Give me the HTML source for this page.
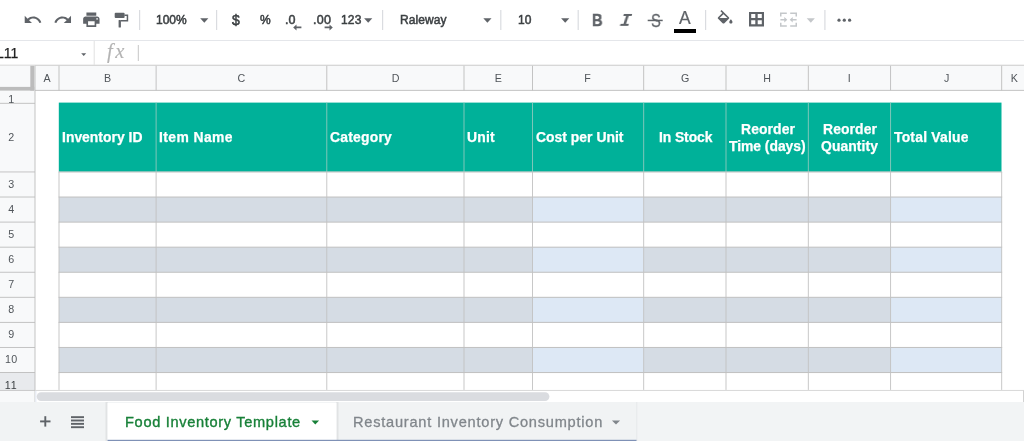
<!DOCTYPE html><html><head><meta charset="utf-8"><title>Food Inventory Template</title><style>
*{box-sizing:border-box;margin:0;padding:0}
html,body{width:1024px;height:441px;overflow:hidden;background:#fff;font-family:"Liberation Sans",sans-serif;}
#root{position:relative;width:1024px;height:441px;overflow:hidden;background:#fff}
.abs{position:absolute}
.ttxt,.ch,.rh,.hl,.tab,.gt{will-change:transform}
#toolbar{left:0;top:0;width:1024px;height:41px;background:#fff}
.ttxt{position:absolute;top:12px;height:16px;line-height:16px;font-size:12px;color:#3c4043;white-space:nowrap;-webkit-text-stroke:0.5px #3c4043}
#fbar{left:0;top:41px;width:1024px;height:25px;background:#fff}
.ch{position:absolute;top:66px;height:24px;font-size:10.7px;color:#50555a;text-align:center;line-height:24px}
.rh{position:absolute;left:0;width:22.500px;letter-spacing:0.300px;font-size:10.7px;color:#50555a;text-align:center;white-space:nowrap}
.hl{position:absolute;color:#fff;font-weight:bold;font-size:13.9px;-webkit-text-stroke:0.25px #fff;white-space:nowrap;line-height:17px;height:17px}
#bottom{left:0;top:402px;width:1024px;height:39px;background:#f1f3f4}
.tab{position:absolute;top:9.900px;font-size:14.6px;line-height:20px;white-space:nowrap}
</style></head><body><div id="root">
<div id="toolbar" class="abs">
<svg class="abs" style="left:0;top:0" width="1024" height="41" viewBox="0 0 1024 41">
<rect x="0" y="40" width="1024" height="1" fill="#e4e6ea"/>
<g fill="#dadce0">
<rect x="139" y="10" width="1.2" height="20"/><rect x="216" y="10" width="1.2" height="20"/><rect x="382" y="10" width="1.2" height="20"/>
<rect x="500.200" y="10" width="1.2" height="20"/><rect x="577.600" y="10" width="1.2" height="20"/><rect x="705" y="10" width="1.2" height="20"/><rect x="824.300" y="10" width="1.2" height="20"/>
</g>
<g fill="#5f6368">
<!-- undo -->
<path transform="translate(23.100,10.100) scale(0.81)" d="M12.5 8c-2.65 0-5.05.99-6.9 2.6L2 7v9h9l-3.62-3.62c1.39-1.16 3.16-1.88 5.12-1.88 3.54 0 6.55 2.31 7.600 5.500l2.370-.78C21.080 11.030 17.150 8 12.500 8z"/>
<!-- redo -->
<path transform="translate(53.200,10.100) scale(0.81)" d="M18.400 10.600C16.550 8.990 14.150 8 11.500 8c-4.650 0-8.580 3.030-9.960 7.220L3.900 16c1.050-3.190 4.050-5.500 7.600-5.500 1.950 0 3.730.72 5.120 1.880L13 16h9V7l-3.600 3.600z"/>
<!-- print -->
<path transform="translate(81.500,10.100) scale(0.82,0.8)" d="M19 8H5c-1.660 0-3 1.340-3 3v6h4v4h12v-4h4v-6c0-1.660-1.340-3-3-3zm-3 11H8v-5h8v5zm3-7c-.55 0-1-.45-1-1s.45-1 1-1 1 .45 1 1-.45 1-1 1zm-1-9H6v4h12V3z"/>
<!-- paint format -->
<rect x="114.700" y="12.700" width="9.900" height="5.200" rx="1"/>
<path d="M124.400 14.600h3.800v6.900h-7.500v-1.500h6v-3.900h-2.300z"/>
<rect x="118.600" y="20" width="2.300" height="7.400" rx="0.5"/>
<!-- carets -->
<path d="M200.200 18.200h8.200l-4.100 4.500z"/>
<path d="M364.100 18.200h8.200l-4.100 4.500z"/>
<path d="M483.300 18.200h8.200l-4.100 4.500z"/>
<path d="M561.100 18.200h8.200l-4.100 4.500z"/>
<!-- decimal arrows -->
<path d="M293.200 27.400l3.300-3v2.100h4.900v1.800h-4.900v2.100z"/>
<path d="M332.800 27.400l-3.300-3v2.100h-4.900v1.800h4.900v2.100z"/>
<!-- strikethrough bar -->
<rect x="647.700" y="19.700" width="15" height="1.500"/>
<!-- fill colour -->
<path transform="translate(715.300,10) scale(0.82,0.8)" d="M16.560 8.940L7.620 0 6.210 1.410l2.380 2.380-5.150 5.150c-.59.590-.59 1.540 0 2.120l5.500 5.500c.29.290.68.440 1.060.440s.77-.15 1.060-.44l5.500-5.500c.59-.58.59-1.530 0-2.120zM5.210 10L10 5.210 14.790 10H5.210zM19 11.500s-2 2.170-2 3.500c0 1.100.9 2 2 2s2-.9 2-2c0-1.330-2-3.500-2-3.500z"/>
<!-- borders -->
<path fill-rule="evenodd" d="M749 11.900h15v14.600h-15zM751.200 14.100v4h4.100v-4zM757.700 14.100v4h4.100v-4zM751.200 20.300v4h4.100v-4zM757.700 20.300v4h4.100v-4z"/>
<!-- more -->
<circle cx="839" cy="20.200" r="1.600"/><circle cx="844.300" cy="20.200" r="1.600"/><circle cx="849.600" cy="20.200" r="1.600"/>
</g>
<!-- black colour bar -->
<rect x="674" y="29" width="22" height="4" fill="#000"/>
<!-- merge (disabled) -->
<g fill="#c4c7ca">
<path d="M780 12.500h6.800v1.500h-5.300v2.600h-1.500zM797 12.500h-6.800v1.500h5.300v2.600h1.500zM780 26.800h6.800v-1.500h-5.300v-2.600h-1.500zM797 26.800h-6.800v-1.500h5.300v-2.600h1.500z"/>
<path d="M787.300 19.700l-3-2.700v2h-3.900v1.400h3.900v2zM789.700 19.700l3-2.700v2h3.900v1.400h-3.900v2z"/>
<path d="M806.700 18.200h8.200l-4.100 4.500z"/>
</g>
</svg>
<div class="ttxt" style="left:156px">100%</div>
<div class="ttxt" style="left:231.500px;font-size:14px;top:12px">$</div>
<div class="ttxt" style="left:260px">%</div>
<div class="ttxt" style="left:284.500px;font-size:12.500px">.0</div>
<div class="ttxt" style="left:313px;font-size:12.500px;letter-spacing:0.3px">.00</div>
<div class="ttxt" style="left:341px;letter-spacing:0.2px">123</div>
<div class="ttxt" style="left:399.500px;letter-spacing:0.1px">Raleway</div>
<div class="ttxt" style="left:517.500px">10</div>
<div class="ttxt" style="left:591.600px;font-weight:bold;font-size:17px;top:12.600px;color:#5f6368;-webkit-text-stroke:0.5px #5f6368;transform:scaleX(0.86);transform-origin:0 0">B</div>
<div class="ttxt" style="left:620.300px;font-weight:bold;font-style:italic;font-size:18.500px;top:13.600px;color:#5f6368;-webkit-text-stroke:0;font-family:'Liberation Mono',monospace;transform:skewX(-8deg)">I</div>
<div class="ttxt" style="left:650.600px;font-size:18px;top:12.600px;color:#5f6368;-webkit-text-stroke:0.3px #5f6368;transform:scaleX(0.82);transform-origin:0 0">S</div>
<div class="ttxt" style="left:679px;font-size:17.500px;top:10px;color:#5f6368;-webkit-text-stroke:0.2px #5f6368">A</div>
</div>
<div id="fbar" class="abs">
<svg class="abs" style="left:0;top:0" width="1024" height="25" viewBox="0 41 1024 25">
<rect x="0" y="64.700" width="1024" height="1" fill="#d0d0d0"/>
<rect x="93.700" y="41" width="1" height="24" fill="#e2e2e2"/>
<rect x="137.800" y="45" width="1" height="16" fill="#c6c6c6"/>
<path d="M81.200 53.300h5l-2.500 2.800z" fill="#5f6368"/>
</svg>
<div class="abs gt" style="left:-4.500px;top:4.200px;font-size:14px;color:#1f1f1f;line-height:16px;-webkit-text-stroke:0.25px #1f1f1f">L11</div>
<div class="abs gt" style="left:107px;top:-0.800px;font-size:20.500px;letter-spacing:2.500px;line-height:22px;color:#b4b4b4;-webkit-text-stroke:0.15px #b4b4b4;font-style:italic;font-family:'Liberation Serif',serif">fx</div>
</div>
<svg class="abs" style="left:0;top:65px" width="1024" height="337" viewBox="0 65 1024 337">
<rect x="0" y="65.800" width="1024" height="24.600" fill="#f8f9fa"/>
<rect x="0" y="90" width="35" height="312" fill="#f8f9fa"/>
<rect x="0" y="372.51" width="35" height="17.49" fill="#e8eaed"/>
<rect x="35" y="65" width="989" height="0.900" fill="#d6d6d6"/>
<rect x="35" y="89.900" width="989" height="0.900" fill="#bdbdbd"/>
<rect x="34.55" y="65.800" width="0.900" height="24.600" fill="#bdbdbd"/>
<rect x="58.55" y="65.800" width="0.900" height="24.600" fill="#bdbdbd"/>
<rect x="155.65" y="65.800" width="0.900" height="24.600" fill="#bdbdbd"/>
<rect x="326.35" y="65.800" width="0.900" height="24.600" fill="#bdbdbd"/>
<rect x="463.55" y="65.800" width="0.900" height="24.600" fill="#bdbdbd"/>
<rect x="532.00" y="65.800" width="0.900" height="24.600" fill="#bdbdbd"/>
<rect x="643.25" y="65.800" width="0.900" height="24.600" fill="#bdbdbd"/>
<rect x="725.55" y="65.800" width="0.900" height="24.600" fill="#bdbdbd"/>
<rect x="807.85" y="65.800" width="0.900" height="24.600" fill="#bdbdbd"/>
<rect x="890.15" y="65.800" width="0.900" height="24.600" fill="#bdbdbd"/>
<rect x="1001.25" y="65.800" width="0.900" height="24.600" fill="#bdbdbd"/>
<rect x="30.300" y="65.800" width="4" height="24.800" fill="#bcbcbc"/>
<rect x="0" y="86.900" width="34.300" height="3.700" fill="#bcbcbc"/>
<rect x="34.550" y="90.400" width="0.900" height="300" fill="#bdbdbd"/>
<rect x="34.550" y="390" width="0.900" height="12" fill="#c8c8c8"/>
<rect x="0" y="102.85" width="35" height="0.900" fill="#bdbdbd"/>
<rect x="0" y="171.50" width="35" height="0.900" fill="#bdbdbd"/>
<rect x="0" y="196.57" width="35" height="0.900" fill="#bdbdbd"/>
<rect x="0" y="221.64" width="35" height="0.900" fill="#bdbdbd"/>
<rect x="0" y="246.71" width="35" height="0.900" fill="#bdbdbd"/>
<rect x="0" y="271.78" width="35" height="0.900" fill="#bdbdbd"/>
<rect x="0" y="296.85" width="35" height="0.900" fill="#bdbdbd"/>
<rect x="0" y="321.92" width="35" height="0.900" fill="#bdbdbd"/>
<rect x="0" y="346.99" width="35" height="0.900" fill="#bdbdbd"/>
<rect x="0" y="372.06" width="35" height="0.900" fill="#bdbdbd"/>
<rect x="58.80" y="102.6" width="942.70" height="69.15" fill="#00b199"/>
<rect x="59.0" y="197.02" width="942.70" height="25.07" fill="#d5dce4"/>
<rect x="532.45" y="197.02" width="111.25" height="25.07" fill="#dde8f5"/>
<rect x="890.6" y="197.02" width="111.10" height="25.07" fill="#dde8f5"/>
<rect x="59.0" y="247.16" width="942.70" height="25.07" fill="#d5dce4"/>
<rect x="532.45" y="247.16" width="111.25" height="25.07" fill="#dde8f5"/>
<rect x="890.6" y="247.16" width="111.10" height="25.07" fill="#dde8f5"/>
<rect x="59.0" y="297.30" width="942.70" height="25.07" fill="#d5dce4"/>
<rect x="532.45" y="297.30" width="111.25" height="25.07" fill="#dde8f5"/>
<rect x="890.6" y="297.30" width="111.10" height="25.07" fill="#dde8f5"/>
<rect x="59.0" y="347.44" width="942.70" height="25.07" fill="#d5dce4"/>
<rect x="532.45" y="347.44" width="111.25" height="25.07" fill="#dde8f5"/>
<rect x="890.6" y="347.44" width="111.10" height="25.07" fill="#dde8f5"/>
<rect x="155.65" y="102.6" width="0.900" height="69.35" fill="#8cc9bd"/>
<rect x="326.35" y="102.6" width="0.900" height="69.35" fill="#8cc9bd"/>
<rect x="463.55" y="102.6" width="0.900" height="69.35" fill="#8cc9bd"/>
<rect x="532.00" y="102.6" width="0.900" height="69.35" fill="#8cc9bd"/>
<rect x="643.25" y="102.6" width="0.900" height="69.35" fill="#8cc9bd"/>
<rect x="725.55" y="102.6" width="0.900" height="69.35" fill="#8cc9bd"/>
<rect x="807.85" y="102.6" width="0.900" height="69.35" fill="#8cc9bd"/>
<rect x="890.15" y="102.6" width="0.900" height="69.35" fill="#8cc9bd"/>
<rect x="58.55" y="171.45" width="943.60" height="1.050" fill="#c2c2c2"/>
<rect x="58.55" y="196.52" width="943.60" height="1.050" fill="#c2c2c2"/>
<rect x="58.55" y="221.59" width="943.60" height="1.050" fill="#c2c2c2"/>
<rect x="58.55" y="246.66" width="943.60" height="1.050" fill="#c2c2c2"/>
<rect x="58.55" y="271.73" width="943.60" height="1.050" fill="#c2c2c2"/>
<rect x="58.55" y="296.80" width="943.60" height="1.050" fill="#c2c2c2"/>
<rect x="58.55" y="321.87" width="943.60" height="1.050" fill="#c2c2c2"/>
<rect x="58.55" y="346.94" width="943.60" height="1.050" fill="#c2c2c2"/>
<rect x="58.55" y="372.01" width="943.60" height="1.050" fill="#c2c2c2"/>
<rect x="58.55" y="171.95" width="0.900" height="218.05" fill="#c2c2c2"/>
<rect x="155.65" y="171.95" width="0.900" height="218.05" fill="#c2c2c2"/>
<rect x="326.35" y="171.95" width="0.900" height="218.05" fill="#c2c2c2"/>
<rect x="463.55" y="171.95" width="0.900" height="218.05" fill="#c2c2c2"/>
<rect x="532.00" y="171.95" width="0.900" height="218.05" fill="#c2c2c2"/>
<rect x="643.25" y="171.95" width="0.900" height="218.05" fill="#c2c2c2"/>
<rect x="725.55" y="171.95" width="0.900" height="218.05" fill="#c2c2c2"/>
<rect x="807.85" y="171.95" width="0.900" height="218.05" fill="#c2c2c2"/>
<rect x="890.15" y="171.95" width="0.900" height="218.05" fill="#c2c2c2"/>
<rect x="1001.25" y="171.95" width="0.900" height="218.05" fill="#c2c2c2"/>
<rect x="35.450" y="389.900" width="989" height="12.300" fill="#fff"/>
<rect x="35.450" y="390.900" width="0.900" height="11.100" fill="#dfe5f3"/>
<rect x="0" y="389.950" width="35" height="0.900" fill="#c4c4c4"/>
<rect x="35" y="389.950" width="989" height="0.900" fill="#d4d4d4"/>
<rect x="1023" y="390.500" width="1" height="11.500" fill="#d2d2d2"/>
<rect x="36.700" y="392.200" width="512.700" height="8.700" rx="4.350" fill="#dadce0"/>
</svg>
<div class="ch" style="left:35.00px;width:24.00px">A</div>
<div class="ch" style="left:59.00px;width:97.10px">B</div>
<div class="ch" style="left:156.10px;width:170.70px">C</div>
<div class="ch" style="left:326.80px;width:137.20px">D</div>
<div class="ch" style="left:464.00px;width:68.45px">E</div>
<div class="ch" style="left:532.45px;width:111.25px">F</div>
<div class="ch" style="left:643.70px;width:82.30px">G</div>
<div class="ch" style="left:726.00px;width:82.30px">H</div>
<div class="ch" style="left:808.30px;width:82.30px">I</div>
<div class="ch" style="left:890.60px;width:111.10px">J</div>
<div class="ch" style="left:1001.70px;width:24.6px">K</div>
<div class="rh" style="top:91px;height:12px;line-height:12px;overflow:hidden"><span style="position:relative;top:2px">1</span></div>
<div class="rh" style="top:103.30px;height:68.65px;line-height:68.65px">2</div>
<div class="rh" style="top:171.95px;height:25.07px;line-height:25.07px">3</div>
<div class="rh" style="top:197.02px;height:25.07px;line-height:25.07px">4</div>
<div class="rh" style="top:222.09px;height:25.07px;line-height:25.07px">5</div>
<div class="rh" style="top:247.16px;height:25.07px;line-height:25.07px">6</div>
<div class="rh" style="top:272.23px;height:25.07px;line-height:25.07px">7</div>
<div class="rh" style="top:297.30px;height:25.07px;line-height:25.07px">8</div>
<div class="rh" style="top:322.37px;height:25.07px;line-height:25.07px">9</div>
<div class="rh" style="top:347.44px;height:25.07px;line-height:25.07px">10</div>
<div class="rh" style="top:372.51px;height:17.49px;line-height:25px;overflow:hidden;color:#3c4043;letter-spacing:0.9px">11</div>
<div class="hl" style="left:62.20px;top:129.0px;letter-spacing:0.018px">Inventory ID</div>
<div class="hl" style="left:158.90px;top:129.0px;letter-spacing:0.415px">Item Name</div>
<div class="hl" style="left:329.60px;top:129.0px;letter-spacing:0.223px">Category</div>
<div class="hl" style="left:467.30px;top:129.0px;letter-spacing:0.246px">Unit</div>
<div class="hl" style="left:535.60px;top:129.0px;letter-spacing:0.023px">Cost per Unit</div>
<div class="hl" style="left:658.60px;top:129.0px;letter-spacing:-0.091px">In Stock</div>
<div class="hl" style="left:740.60px;top:121.0px;letter-spacing:0.105px">Reorder</div>
<div class="hl" style="left:729.30px;top:137.5px;letter-spacing:-0.032px">Time (days)</div>
<div class="hl" style="left:822.80px;top:121.0px;letter-spacing:0.105px">Reorder</div>
<div class="hl" style="left:821.40px;top:137.5px;letter-spacing:0.082px">Quantity</div>
<div class="hl" style="left:894.40px;top:129.0px;letter-spacing:0.217px">Total Value</div>
<div id="bottom" class="abs">
<svg class="abs" style="left:0;top:0" width="1024" height="39" viewBox="0 402 1024 39">
<defs><linearGradient id="gl" x1="0" x2="1" y1="0" y2="0"><stop offset="0" stop-color="#000" stop-opacity="0"/><stop offset="1" stop-color="#000" stop-opacity="0.10"/></linearGradient>
<linearGradient id="gr" x1="0" x2="1" y1="0" y2="0"><stop offset="0" stop-color="#000" stop-opacity="0.10"/><stop offset="1" stop-color="#000" stop-opacity="0"/></linearGradient></defs>
<rect x="637" y="402" width="387" height="39" fill="#f2f4f5"/>
<rect x="104.500" y="402" width="3" height="39" fill="url(#gl)"/>
<rect x="336.500" y="402" width="3" height="39" fill="url(#gr)"/>
<rect x="107.500" y="402.900" width="229" height="38.100" fill="#fff"/>
<rect x="636.300" y="402" width="1" height="39" fill="#e6e8ea"/>
<rect x="107.500" y="439.800" width="529" height="1.200" fill="#7f91b6"/>
<g fill="#5f6368">
<rect x="40.100" y="420.450" width="10.400" height="1.900"/><rect x="44.350" y="416.200" width="1.900" height="10.400"/>
<rect x="71" y="416.200" width="13" height="1.900"/><rect x="71" y="419.550" width="13" height="1.900"/><rect x="71" y="422.900" width="13" height="1.900"/><rect x="71" y="426.250" width="13" height="1.900"/>
<path d="M611.900 420.400h8.200l-4.100 4.200z" fill="#80868b"/>
</g>
<path d="M311.500 420.400h7.600l-3.800 4.200z" fill="#188038"/>
</svg>
<div class="tab" style="left:125.1px;letter-spacing:0.676px;color:#188038;-webkit-text-stroke:0.35px #188038">Food Inventory Template</div>
<div class="tab" style="left:353.2px;letter-spacing:0.768px;color:#80868b;-webkit-text-stroke:0.3px #80868b">Restaurant Inventory Consumption</div>
</div>
</div></body></html>
